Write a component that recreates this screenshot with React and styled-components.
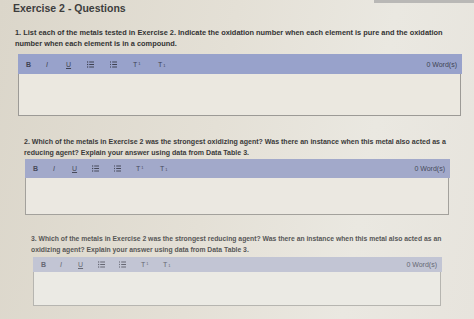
import React from 'react'
import styled, { createGlobalStyle } from 'styled-components'

const GlobalStyle = createGlobalStyle`
    html, body {
        margin: 0;
        padding: 0;
    }
    body {
        width: 474px;
        height: 319px;
        overflow: hidden;
        font-family: "Liberation Sans", Arial, sans-serif;
        background: linear-gradient(100deg, #dbd6ca 0%, #e4e0d6 45%, #eae8e1 75%, #e7e4dd 100%);
    }
`

const Page = styled.div`
    display: flex;
    flex-direction: column;
    position: relative;
`

const TopStrip = styled.div`
    position: absolute;
    top: 0;
    right: 0;
    width: 100px;
    height: 3px;
    background: #b9b8b6;
`

const Title = styled.h1`
    margin: 0;
    padding: 2px 0 0 13px;
    font-size: 10.5px;
    font-weight: bold;
    color: #3d3d3d;
    line-height: 12px;
`

const Section = styled.section`
    display: flex;
    flex-direction: column;
    margin-top: ${p => p.top}px;
    padding-left: ${p => p.left}px;
    padding-right: ${p => p.right}px;
`

const Question = styled.p`
    margin: 0 0 0 ${p => p.indent}px;
    font-size: ${p => p.size}px;
    font-weight: bold;
    line-height: 11px;
    color: ${p => p.color};
    max-width: ${p => p.width}px;
`

const Editor = styled.div`
    display: flex;
    flex-direction: column;
    margin-top: ${p => p.gap}px;
`

const Toolbar = styled.div`
    display: flex;
    align-items: center;
    height: ${p => p.height}px;
    padding: 0 5px 0 8px;
    background: ${p => p.bg};
    color: ${p => p.ink};
`

const Tool = styled.span`
    width: ${p => p.w}px;
    display: flex;
    align-items: center;
    font-size: 7px;
    font-weight: ${p => (p.bold ? 'bold' : 'normal')};
    font-style: ${p => (p.italic ? 'italic' : 'normal')};
    text-decoration: ${p => (p.underline ? 'underline' : 'none')};
`

const Small = styled.span`
    font-size: 4px;
    align-self: ${p => (p.sub ? 'flex-end' : 'flex-start')};
    margin-left: 1px;
`

const Words = styled.span`
    margin-left: auto;
    font-size: 7px;
    color: ${p => p.ink};
`

const TextArea = styled.div`
    height: ${p => p.height}px;
    border: 1px solid ${p => p.line};
    border-top: none;
    margin-right: 1px;
    background: ${p => p.bg};
`

const ListIcon = ({ numbered }) => (
    <svg width="7" height="7" viewBox="0 0 7 7">
        {[1, 3.5, 6].map(y => (
            <g key={y}>
                <rect x="0" y={y - 0.6} width={numbered ? 0.9 : 1.2} height="1.2" fill="currentColor" />
                <rect x="2.2" y={y - 0.5} width="4.8" height="1" fill="currentColor" />
            </g>
        ))}
    </svg>
)

const sections = [
    {
        n: 1,
        text: 'List each of the metals tested in Exercise 2. Indicate the oxidation number when each element is pure and the oxidation number when each element is in a compound.',
        top: 13, left: 18, right: 12, indent: -3, width: 434, size: 7.4,
        color: '#333333', gap: 5, bar: 20, area: 41,
        bg: '#98a2cb', ink: '#3f4252', areaBg: '#ebe8e0', line: '#9c9a96', tools: [20, 20, 21, 23, 23, 25]
    },
    {
        n: 2,
        text: 'Which of the metals in Exercise 2 was the strongest oxidizing agent? Was there an instance when this metal also acted as a reducing agent? Explain your answer using data from Data Table 3.',
        top: 20, left: 25, right: 24, indent: -1, width: 426, size: 7.05,
        color: '#3a3a3a', gap: 1, bar: 19, area: 36,
        bg: '#a2a9ca', ink: '#474a5a', areaBg: '#ebe8e1', line: '#a3a19c', tools: [20, 19, 20, 22, 22, 24]
    },
    {
        n: 3,
        text: 'Which of the metals in Exercise 2 was the strongest reducing agent? Was there an instance when this metal also acted as an oxidizing agent? Explain your answer using data from Data Table 3.',
        top: 18, left: 33, right: 32, indent: -2, width: 414, size: 6.8,
        color: '#575757', gap: 2, bar: 15, area: 33,
        bg: '#c2c5d4', ink: '#666873', areaBg: '#ebeae4', line: '#b6b5b0', tools: [19, 18, 20, 21, 22, 22]
    }
]

const QuestionBlock = ({ s }) => (
    <Section top={s.top} left={s.left} right={s.right}>
        <Question indent={s.indent} width={s.width} size={s.size} color={s.color}>
            {`${s.n}. ${s.text}`}
        </Question>
        <Editor gap={s.gap}>
            <Toolbar height={s.bar} bg={s.bg} ink={s.ink}>
                <Tool w={s.tools[0]} bold>B</Tool>
                <Tool w={s.tools[1]} italic>I</Tool>
                <Tool w={s.tools[2]} underline>U</Tool>
                <Tool w={s.tools[3]}><ListIcon /></Tool>
                <Tool w={s.tools[4]}><ListIcon numbered /></Tool>
                <Tool w={s.tools[5]}>T<Small>1</Small></Tool>
                <Tool w={20}>T<Small sub>1</Small></Tool>
                <Words ink={s.ink}>0 Word(s)</Words>
            </Toolbar>
            <TextArea height={s.area} bg={s.areaBg} line={s.line} />
        </Editor>
    </Section>
)

export default function App() {
    return (
        <Page>
            <GlobalStyle />
            <TopStrip />
            <Title>Exercise 2 - Questions</Title>
            {sections.map(s => <QuestionBlock key={s.n} s={s} />)}
        </Page>
    )
}
